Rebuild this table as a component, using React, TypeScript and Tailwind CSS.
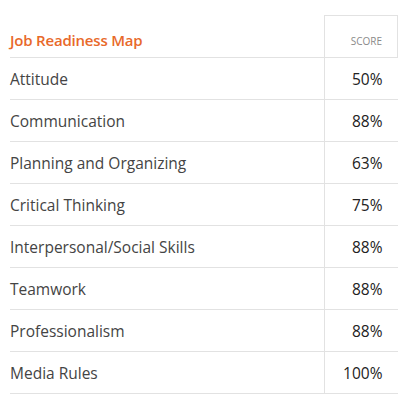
const rows = [
  { label: "Attitude", score: "50%" },
  { label: "Communication", score: "88%" },
  { label: "Planning and Organizing", score: "63%" },
  { label: "Critical Thinking", score: "75%" },
  { label: "Interpersonal/Social Skills", score: "88%" },
  { label: "Teamwork", score: "88%" },
  { label: "Professionalism", score: "88%" },
  { label: "Media Rules", score: "100%" },
];

export default function App() {
  return (
    <div className="w-[400px] h-[401px] bg-white pt-[15px] pl-[10px]" style={{ fontFamily: '"Open Sans", sans-serif' }}>
      <table className="w-[388px] border-collapse">
        <thead>
          <tr className="h-[42px]">
            <th className="text-left align-bottom pb-[6px] text-[15px] font-semibold text-[#e8692a] border-b border-[#e2e2e2] tracking-[-0.2px]">
              Job Readiness Map
            </th>
            <th className="w-[73px] text-right align-bottom pb-[8px] pr-[15px] text-[10px] font-normal text-[#8a8a8a] border border-[#e2e2e2]">
              SCORE
            </th>
          </tr>
        </thead>
        <tbody>
          {rows.map((r) => (
            <tr key={r.label} className="h-[42px]">
              <td className="pt-[3px] text-[15.5px] text-[#444] border-b border-[#e2e2e2]">{r.label}</td>
              <td className="pt-[3px] text-right pr-[15px] text-[15.5px] text-[#222] border-l border-b border-[#e2e2e2]">{r.score}</td>
            </tr>
          ))}
        </tbody>
      </table>
    </div>
  );
}
